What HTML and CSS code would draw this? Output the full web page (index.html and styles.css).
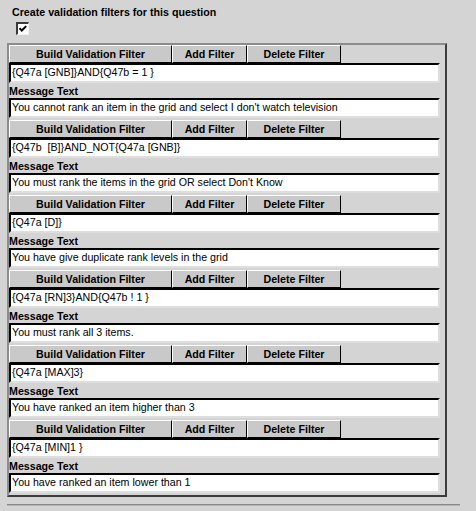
FILE: index.html
```html
<!DOCTYPE html>
<html>
<head>
<meta charset="utf-8">
<title>Validation filters</title>
<link rel="stylesheet" href="styles.css">
</head>
<body>
<div class="title">Create validation filters for this question</div>
<span class="check"><svg viewBox="0 0 10 10" width="10" height="10"><path d="M1.5 4.2 L3.8 6.5 L8.2 2.1" fill="none" stroke="#000" stroke-width="2"/></svg></span>
<div class="filters">
  <div class="filter">
    <div class="btn-row"><button class="btn btn-build">Build Validation Filter</button><button class="btn btn-add">Add Filter</button><button class="btn btn-del">Delete Filter</button></div>
    <div class="field">{Q47a [GNB]}AND{Q47b = 1 }</div>
    <div class="label">Message Text</div>
    <div class="field">You cannot rank an item in the grid and select I don't watch television</div>
  </div>
  <div class="filter">
    <div class="btn-row"><button class="btn btn-build">Build Validation Filter</button><button class="btn btn-add">Add Filter</button><button class="btn btn-del">Delete Filter</button></div>
    <div class="field">{Q47b  [B]}AND_NOT{Q47a [GNB]}</div>
    <div class="label">Message Text</div>
    <div class="field">You must rank the items in the grid OR select Don't Know</div>
  </div>
  <div class="filter">
    <div class="btn-row"><button class="btn btn-build">Build Validation Filter</button><button class="btn btn-add">Add Filter</button><button class="btn btn-del">Delete Filter</button></div>
    <div class="field">{Q47a [D]}</div>
    <div class="label">Message Text</div>
    <div class="field">You have give duplicate rank levels in the grid</div>
  </div>
  <div class="filter">
    <div class="btn-row"><button class="btn btn-build">Build Validation Filter</button><button class="btn btn-add">Add Filter</button><button class="btn btn-del">Delete Filter</button></div>
    <div class="field">{Q47a [RN]3}AND{Q47b ! 1 }</div>
    <div class="label">Message Text</div>
    <div class="field">You must rank all 3 items.</div>
  </div>
  <div class="filter">
    <div class="btn-row"><button class="btn btn-build">Build Validation Filter</button><button class="btn btn-add">Add Filter</button><button class="btn btn-del">Delete Filter</button></div>
    <div class="field">{Q47a [MAX]3}</div>
    <div class="label">Message Text</div>
    <div class="field">You have ranked an item higher than 3</div>
  </div>
  <div class="filter">
    <div class="btn-row"><button class="btn btn-build">Build Validation Filter</button><button class="btn btn-add">Add Filter</button><button class="btn btn-del">Delete Filter</button></div>
    <div class="field">{Q47a [MIN]1 }</div>
    <div class="label">Message Text</div>
    <div class="field">You have ranked an item lower than 1</div>
  </div>
</div>
<div class="rule"></div>
</body>
</html>
```
FILE: styles.css
```css
html, body {
  margin: 0;
  padding: 0;
  background: #d4d4d4;
  font-family: "Liberation Sans", Arial, sans-serif;
  color: #000;
}

.title {
  margin: 6px 0 0 12px;
  font-weight: bold;
  font-size: 10.67px;
  line-height: 13px;
  height: 13px;
}

.check {
  display: block;
  box-sizing: border-box;
  width: 13px;
  height: 13px;
  margin: 3px 0 0 16px;
  background: #fff;
  border-style: solid;
  border-width: 2px 1px 1px 2px;
  border-color: #3a3a3a #f4f4f4 #f4f4f4 #3a3a3a;
}

.check svg {
  display: block;
}

.filters {
  box-sizing: border-box;
  width: 440px;
  margin: 8px 0 0 7px;
  border-style: solid;
  border-width: 2px;
  border-color: #8c8c8c #3c3c3c #3c3c3c #8c8c8c;
  padding: 0;
}

.filter {
  display: flex;
  flex-direction: column;
  padding-bottom: 2px;
}

.btn-row {
  display: flex;
  height: 18px;
}

.btn {
  box-sizing: border-box;
  height: 18px;
  margin: 0;
  padding: 0;
  border-style: solid;
  border-width: 1px;
  border-color: #ffffff #000 #000 #ffffff;
  background: #c9c9c9;
  font-family: "Liberation Sans", Arial, sans-serif;
  font-weight: bold;
  font-size: 10.67px;
  line-height: 14px;
  color: #000;
  text-align: center;
}

.btn-build { width: 163px; }
.btn-add { width: 75px; }
.btn-del { width: 94px; }

.field {
  box-sizing: border-box;
  width: 431px;
  height: 20px;
  background: #fff;
  border-style: solid;
  border-width: 2px;
  border-color: #000 #dedede #dedede #000;
  padding: 0 0 0 1px;
  font-size: 10.67px;
  line-height: 15px;
  white-space: pre;
  overflow: hidden;
}

.label {
  box-sizing: border-box;
  height: 15px;
  padding-top: 2px;
  font-weight: bold;
  font-size: 10.67px;
  line-height: 13px;
}

.rule {
  width: 453px;
  margin: 7px 0 0 7px;
  border-top: 1px solid #8a8a8a;
  border-bottom: 1px solid #b4b4b4;
}
```
